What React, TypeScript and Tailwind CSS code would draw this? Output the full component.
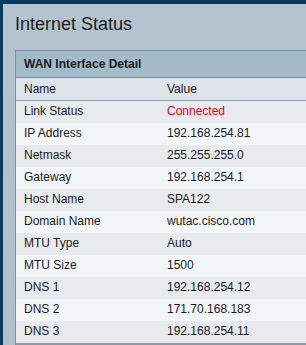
const rows: [string, string][] = [
  ["Link Status", "Connected"],
  ["IP Address", "192.168.254.81"],
  ["Netmask", "255.255.255.0"],
  ["Gateway", "192.168.254.1"],
  ["Host Name", "SPA122"],
  ["Domain Name", "wutac.cisco.com"],
  ["MTU Type", "Auto"],
  ["MTU Size", "1500"],
  ["DNS 1", "192.168.254.12"],
  ["DNS 2", "171.70.168.183"],
  ["DNS 3", "192.168.254.11"],
];

export default function App() {
  return (
    <div className="w-[306px] h-[345px] overflow-hidden bg-[#0c3a5f] pt-[4px] pl-[3px] font-['Liberation_Sans',Arial,sans-serif]">
      <div className="h-full flex flex-col bg-gradient-to-b from-[#b3c4d0] to-[#aebfcb]">
        <h1 className="h-[46px] pl-[12px] pt-[9px] text-[18px] leading-[22px] text-[#1c1c1c]">Internet Status</h1>
        <div className="ml-[12px] flex-1 flex flex-col border-l border-t border-[#7d93a2] bg-[#eef2f5]">
          <div className="h-[27px] flex items-center pl-[8px] bg-[#a3bac8] border-b border-[#7d93a2] text-[12px] font-bold text-[#1a1a1a]">
            WAN Interface Detail
          </div>
          <div className="h-[23px] flex items-center pb-[1px] bg-[#dee4e9] border-b border-[#8c9ca8] text-[12px] text-[#1a1a1a]">
            <span className="w-[151px] pl-[8px]">Name</span>
            <span>Value</span>
          </div>
          {rows.map(([name, value], i) => (
            <div
              key={name}
              className={`h-[22px] flex items-center pb-[3px] text-[12px] text-[#1a1a1a] ${i % 2 === 0 ? "bg-[#e8ebee]" : "bg-[#f3f6f9]"}`}
            >
              <span className="w-[151px] pl-[8px]">{name}</span>
              <span className={value === "Connected" ? "text-[#e0001b]" : ""}>{value}</span>
            </div>
          ))}
          <div className="flex-1 bg-[#8a9ba7]" />
        </div>
      </div>
    </div>
  );
}
